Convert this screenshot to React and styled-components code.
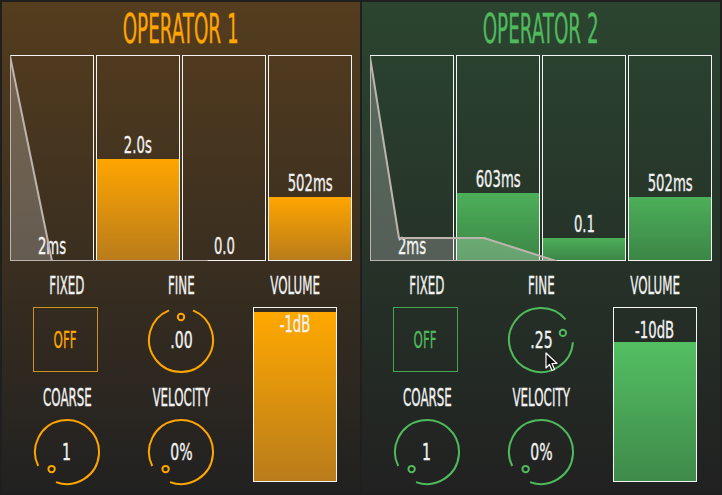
import React from "react";
import styled, { createGlobalStyle } from "styled-components";

const GlobalStyle = createGlobalStyle`
  html, body {
    margin: 0;
    padding: 0;
    background: #1f1f1f;
  }
  * {
    box-sizing: border-box;
  }
`;

const THEMES = {
  orange: {
    top: "#553d1e",
    accent: "#ffa500",
    box: "#cf911c",
    fillTop: "#ffa500",
    fillBottom: "#b97c1b",
    volTop: "#ffa800",
    volBottom: "#b97c1b",
  },
  green: {
    top: "#2b4530",
    accent: "#4fba5c",
    box: "#45a552",
    fillTop: "#4caf59",
    fillBottom: "#3c8646",
    volTop: "#53bf62",
    volBottom: "#3f8a4a",
  },
};

const Rack = styled.div`
  position: relative;
  display: flex;
  gap: 2px;
  padding: 2px;
  width: 722px;
  height: 495px;
  background: #1f1f1f;
  font-family: "DejaVu Sans Condensed", "DejaVu Sans", sans-serif;
  font-stretch: condensed;
  color: #f2f2f2;
`;

const Panel = styled.section`
  flex: 1;
  display: flex;
  flex-direction: column;
  padding: 0 8px;
  background: linear-gradient(to bottom, ${(p) => p.$t.top} 0%, #212121 100%);
`;

const Cond = styled.span`
  display: inline-block;
  white-space: nowrap;
  -webkit-text-stroke: 0.35px currentColor;
  transform: scaleX(${(p) => p.$sx || 0.66});
`;

const Title = styled.h1`
  margin: 0;
  height: 52px;
  display: flex;
  align-items: center;
  justify-content: center;
  font-size: 40px;
  line-height: 40px;
  font-weight: normal;
  color: ${(p) => p.$t.accent};
  padding-top: 1px;
`;

const Envelope = styled.div`
  position: relative;
  margin-top: 1px;
  height: 206px;
  display: grid;
  grid-template-columns: repeat(4, 1fr);
  gap: 2px;
`;

const Stage = styled.div`
  border: 1px solid #f4f4f4;
  display: flex;
  flex-direction: column;
  justify-content: flex-end;
  align-items: stretch;
`;

const StageValue = styled.div`
  text-align: center;
  font-size: 23px;
  line-height: 22px;
  margin-bottom: 3px;
`;

const Fill = styled.div`
  background: linear-gradient(
    to bottom,
    ${(p) => p.$from} 0%,
    ${(p) => p.$to} 100%
  );
`;

const Curve = styled.svg`
  position: absolute;
  inset: 0;
  width: 100%;
  height: 100%;
  pointer-events: none;
`;

const Controls = styled.div`
  margin-top: 15px;
  display: grid;
  grid-template-columns: repeat(3, 1fr);
  row-gap: 14px;
`;

const Cell = styled.div`
  display: flex;
  flex-direction: column;
  align-items: center;
  grid-row: ${(p) => (p.$tall ? "span 2" : "auto")};
`;

const Label = styled.div`
  font-size: 24px;
  line-height: 20px;
  margin-bottom: 11px;
`;

const Toggle = styled.div`
  width: 65px;
  height: 65px;
  margin-right: 4px;
  border: 1.5px solid ${(p) => p.$t.box};
  display: flex;
  align-items: center;
  justify-content: center;
  font-size: 23px;
  color: ${(p) => p.$t.accent};
`;

const KnobWrap = styled.div`
  position: relative;
  width: 68px;
  height: 68px;
  margin-top: -1px;
`;

const KnobValue = styled.div`
  position: absolute;
  inset: 0;
  display: flex;
  align-items: center;
  justify-content: center;
  font-size: 23px;
`;

const Meter = styled.div`
  position: relative;
  width: 84px;
  height: 175px;
  border: 1px solid #f4f4f4;
  display: flex;
  flex-direction: column;
  justify-content: flex-end;
`;

const MeterValue = styled.div`
  position: absolute;
  left: 0;
  right: 0;
  text-align: center;
  font-size: 23px;
  line-height: 22px;
`;

const Cursor = styled.svg`
  position: absolute;
  left: 545px;
  top: 352px;
  width: 14px;
  height: 20px;
`;

const pt = (cx, cy, r, deg) => {
  const a = (deg * Math.PI) / 180;
  return [cx + r * Math.sin(a), cy - r * Math.cos(a)];
};

function Knob({ value, angle, t }) {
  const gap = 22;
  const [x1, y1] = pt(34, 34, 32, angle + gap);
  const [x2, y2] = pt(34, 34, 32, angle + 360 - gap);
  const [dx, dy] = pt(34, 34, 23, angle);
  return (
    <KnobWrap>
      <svg width="68" height="68" viewBox="0 0 68 68">
        <path
          d={`M ${x1} ${y1} A 32 32 0 1 1 ${x2} ${y2}`}
          fill="none"
          stroke={t.accent}
          strokeWidth="2"
        />
        <circle cx={dx} cy={dy} r="3.2" fill="none" stroke={t.accent} strokeWidth="2" />
      </svg>
      <KnobValue>
        <Cond $sx={0.68}>{value}</Cond>
      </KnobValue>
    </KnobWrap>
  );
}

const OPERATORS = [
  {
    name: "OPERATOR 1",
    theme: THEMES.orange,
    stages: [
      { value: "2ms", fill: 0 },
      { value: "2.0s", fill: 101 },
      { value: "0.0", fill: 0 },
      { value: "502ms", fill: 63 },
    ],
    curve: "0,206 0,1 42,206 197,206",
    fine: { value: ".00", angle: 0 },
    coarse: { value: "1", angle: -138 },
    velocity: { value: "0%", angle: -138 },
    volume: { value: "-1dB", fill: 169, labelTop: 5 },
  },
  {
    name: "OPERATOR 2",
    theme: THEMES.green,
    stages: [
      { value: "2ms", fill: 0 },
      { value: "603ms", fill: 67 },
      { value: "0.1", fill: 22 },
      { value: "502ms", fill: 63 },
    ],
    curve: "0,206 0,2 29,183 114,183 186,206",
    fine: { value: ".25", angle: 72 },
    coarse: { value: "1", angle: -138 },
    velocity: { value: "0%", angle: -138 },
    volume: { value: "-10dB", fill: 139, labelTop: 11 },
  },
];

function Operator({ op }) {
  const t = op.theme;
  return (
    <Panel $t={t}>
      <Title $t={t}>
        <Cond $sx={0.51}>{op.name}</Cond>
      </Title>
      <Envelope>
        {op.stages.map((s, i) => (
          <Stage key={i}>
            <StageValue>
              <Cond $sx={0.64}>{s.value}</Cond>
            </StageValue>
            <Fill
              $from={t.fillTop}
              $to={t.fillBottom}
              style={{ height: s.fill }}
            />
          </Stage>
        ))}
        <Curve viewBox="0 0 342 206" preserveAspectRatio="none">
          <polygon
            points={op.curve}
            fill="rgba(255,255,255,0.22)"
            stroke="#bdb5ad"
            strokeWidth="2"
            strokeLinejoin="round"
          />
        </Curve>
      </Envelope>
      <Controls>
        <Cell>
          <Label>
            <Cond $sx={0.55}>FIXED</Cond>
          </Label>
          <Toggle $t={t}>
            <Cond $sx={0.57}>OFF</Cond>
          </Toggle>
        </Cell>
        <Cell>
          <Label>
            <Cond $sx={0.55}>FINE</Cond>
          </Label>
          <Knob {...op.fine} t={t} />
        </Cell>
        <Cell $tall>
          <Label>
            <Cond $sx={0.55}>VOLUME</Cond>
          </Label>
          <Meter>
            <Fill
              $from={t.volTop}
              $to={t.volBottom}
              style={{ height: op.volume.fill }}
            />
            <MeterValue style={{ top: op.volume.labelTop }}>
              <Cond $sx={0.64}>{op.volume.value}</Cond>
            </MeterValue>
          </Meter>
        </Cell>
        <Cell>
          <Label>
            <Cond $sx={0.55}>COARSE</Cond>
          </Label>
          <Knob {...op.coarse} t={t} />
        </Cell>
        <Cell>
          <Label>
            <Cond $sx={0.55}>VELOCITY</Cond>
          </Label>
          <Knob {...op.velocity} t={t} />
        </Cell>
      </Controls>
    </Panel>
  );
}

export default function App() {
  return (
    <>
      <GlobalStyle />
      <Rack>
        {OPERATORS.map((op) => (
          <Operator key={op.name} op={op} />
        ))}
        <Cursor viewBox="0 0 14 20">
          <path
            d="M1 1 L1 16 L4.5 12.5 L7 18.5 L9.5 17.5 L7 11.5 L12 11.5 Z"
            fill="#111"
            stroke="#fff"
            strokeWidth="1.2"
            strokeLinejoin="round"
          />
        </Cursor>
      </Rack>
    </>
  );
}
